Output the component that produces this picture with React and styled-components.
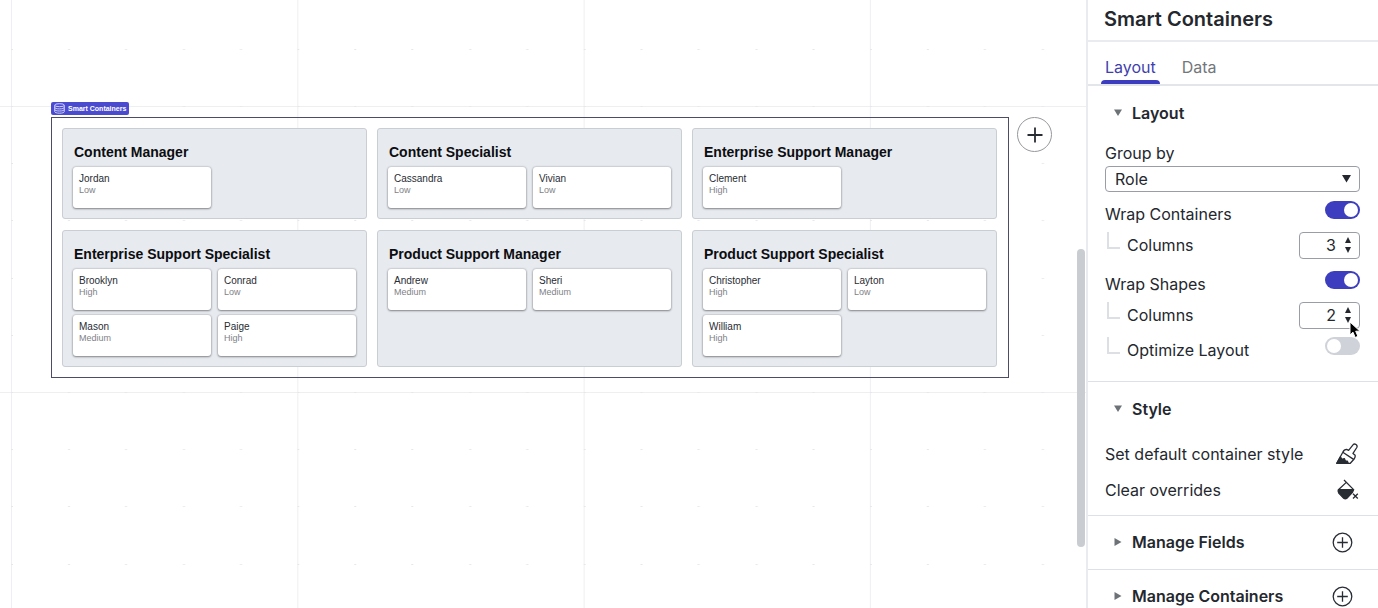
import React, { useState } from 'react';
import styled, { createGlobalStyle } from 'styled-components';

const GlobalStyle = createGlobalStyle`
  * {
    box-sizing: border-box;
  }
  body {
    margin: 0;
    background: #fff;
    color: #24282e;
    font-family: Inter, "Liberation Sans", sans-serif;
    font-size: 16px;
  }
  button, input, select {
    font: inherit;
    color: inherit;
  }
`;

const groups = [
  { role: 'Content Manager', people: [['Jordan', 'Low']] },
  { role: 'Content Specialist', people: [['Cassandra', 'Low'], ['Vivian', 'Low']] },
  { role: 'Enterprise Support Manager', people: [['Clement', 'High']] },
  {
    role: 'Enterprise Support Specialist',
    people: [['Brooklyn', 'High'], ['Conrad', 'Low'], ['Mason', 'Medium'], ['Paige', 'High']],
  },
  { role: 'Product Support Manager', people: [['Andrew', 'Medium'], ['Sheri', 'Medium']] },
  {
    role: 'Product Support Specialist',
    people: [['Christopher', 'High'], ['Layton', 'Low'], ['William', 'High']],
  },
];

/* Page */

const Page = styled.div`
  display: flex;
  height: 100vh;
  overflow: hidden;
`;

const Canvas = styled.main`
  position: relative;
  flex: 1;
  min-width: 0;
  padding: 102px 34px 0 51px;
`;

const GridLines = styled.svg`
  position: absolute;
  inset: 0;
  width: 100%;
  height: 100%;
  z-index: -1;
`;

const ScrollThumb = styled.div`
  position: absolute;
  top: 41%;
  right: 1px;
  width: 8px;
  height: 49%;
  border-radius: 4px;
  background: #c9cdd1;
`;

const Board = styled.div`
  display: flex;
  align-items: flex-start;
  gap: 8px;
`;

const Tag = styled.div`
  display: flex;
  align-items: center;
  gap: 3px;
  width: max-content;
  height: 13px;
  margin-bottom: 2px;
  padding: 0 3px;
  border-radius: 2px;
  background: #4b4bd0;
  color: #fff;
  font: bold 7px/13px "Liberation Sans", Arial, sans-serif;
`;

const Frame = styled.section`
  flex: 1;
  display: grid;
  grid-template-columns: repeat(${(props) => props.$columns}, 1fr);
  gap: 11px 10px;
  padding: 10px 11px 10px 10px;
  border: 1px solid #4c4c66;
  font-family: "Liberation Sans", Arial, sans-serif;
`;

const Container = styled.article`
  padding: 10px;
  border: 1px solid #c9cdd4;
  border-radius: 3px;
  background: #e7eaef;
`;

const ContainerTitle = styled.h2`
  margin: 0 0 2px;
  padding-left: 1px;
  color: #0c0d10;
  font-size: 14px;
  line-height: 26px;
  white-space: nowrap;
`;

const Cards = styled.div`
  display: grid;
  grid-template-columns: repeat(${(props) => props.$columns}, 1fr);
  gap: 5px 7px;
`;

const Card = styled.div`
  height: 41px;
  padding: 6px;
  border-radius: 3px;
  background: #fff;
  box-shadow: 0 0 2px rgba(60, 64, 72, 0.45), 0 1px 2px rgba(40, 44, 51, 0.45);
`;

const Name = styled.div`
  color: #282c33;
  font-size: 10px;
  line-height: 12px;
`;

const Level = styled.div`
  color: #808287;
  font-size: 9px;
  line-height: 11px;
`;

const AddButton = styled.button`
  display: flex;
  align-items: center;
  justify-content: center;
  width: 35px;
  height: 35px;
  padding: 0;
  border: 1px solid #96989d;
  border-radius: 50%;
  background: #fff;
`;

/* Side panel */

const Panel = styled.aside`
  flex: none;
  width: 292px;
  border-left: 2px solid #e9ebee;
  background: #fff;
  overflow: hidden;
`;

const PanelTitle = styled.h1`
  margin: 0;
  padding: 0 16px 1px;
  border-bottom: 2px solid #e9ebee;
  font-size: 20px;
  font-weight: 600;
  line-height: 39px;
`;

const Tabs = styled.nav`
  display: flex;
  gap: 18px;
  padding: 0 13px;
  border-bottom: 2px solid #e2e6ea;
`;

const Tab = styled.button`
  position: relative;
  height: 42px;
  padding: 7px 4px 0;
  border: 0;
  background: none;
  color: ${(props) => (props.$active ? '#3f3fae' : '#73767b')};

  &::after {
    content: '';
    position: absolute;
    left: 0;
    right: 0;
    bottom: 0;
    height: 4px;
    border-radius: 4px 4px 0 0;
    background: ${(props) => (props.$active ? '#3d3dbf' : 'none')};
  }
`;

const Section = styled.section`
  padding: 0 18px ${(props) => props.$bottom || 0}px 17px;
  border-bottom: 1px solid #dde0e4;
`;

const SectionHead = styled.div`
  display: flex;
  align-items: center;
  justify-content: space-between;
  height: ${(props) => (props.$open ? 54 : 53)}px;
  padding: 0 7px 1px 9px;
`;

const SectionToggle = styled.button`
  display: flex;
  align-items: center;
  gap: 10px;
  padding: 0;
  border: 0;
  background: none;
  font-weight: 600;
  white-space: nowrap;
`;

const IconButton = styled.button`
  display: flex;
  padding: 0;
  border: 0;
  background: none;
`;

const FieldLabel = styled.label`
  display: block;
  line-height: 26px;
`;

const SelectBox = styled.div`
  display: grid;
  align-items: center;

  > * {
    grid-area: 1 / 1;
  }
  svg {
    justify-self: end;
    margin-right: 9px;
    pointer-events: none;
  }
`;

const Select = styled.select`
  width: 100%;
  height: 26px;
  padding: 0 9px;
  border: 1px solid #9a9da5;
  border-radius: 4px;
  background: #fff;
  appearance: none;
`;

const Row = styled.div`
  display: flex;
  align-items: flex-start;
  justify-content: space-between;
  padding: ${(props) => props.$top}px 0 ${(props) => props.$bottom}px;
  line-height: 27px;
`;

const ChildLabel = styled.label`
  display: flex;

  &::before {
    content: '';
    width: 11px;
    height: 15px;
    margin: 0 7px 0 2px;
    border: solid #dcdfe4;
    border-width: 0 0 2px 2px;
  }
`;

const Switch = styled.input.attrs({ type: 'checkbox' })`
  width: 35px;
  height: 18px;
  margin: 0;
  padding: 2px;
  border-radius: 9px;
  background: #cfd2d8;
  appearance: none;

  &::before {
    content: '';
    display: block;
    width: 14px;
    height: 14px;
    border-radius: 50%;
    background: #fff;
  }
  &:checked {
    background: #3d3dbf;
  }
  &:checked::before {
    margin-left: auto;
  }
`;

const Stepper = styled.div`
  display: flex;
  align-items: center;
  width: 61px;
  height: 27px;
  padding-right: 8px;
  border: 1px solid #9a9da5;
  border-radius: 4px;
  background: #fff;
`;

const NumberInput = styled.input.attrs({ type: 'number' })`
  flex: 1;
  min-width: 0;
  height: 24px;
  padding: 0 9px 0 0;
  border: 0;
  background: none;
  text-align: right;
  outline: none;
  appearance: textfield;

  &::-webkit-inner-spin-button {
    appearance: none;
    margin: 0;
  }
`;

const StepButtons = styled.div`
  display: grid;
  gap: 4px;
  padding-bottom: 2px;
`;

const ActionRow = styled.button`
  display: flex;
  align-items: center;
  justify-content: space-between;
  width: 100%;
  height: 36px;
  padding: 0;
  border: 0;
  background: none;
  white-space: nowrap;
`;

const Pointer = styled.svg`
  position: absolute;
  right: -1px;
  bottom: -10px;
  z-index: 1;
`;

const StepperWrap = styled.div`
  position: relative;
`;

/* Icons */

const DatabaseIcon = () => (
  <svg width="11" height="11" viewBox="0 0 11 11" fill="none" stroke="#d9d9ff" strokeWidth="0.9">
    <ellipse cx="5.5" cy="2.2" rx="4.8" ry="1.5" />
    <path d="M.7 2.2v6.4c0 .9 2.100 1.600 4.800 1.600s4.800-.7 4.800-1.600V2.200M.7 4.400c0 .9 2.100 1.500 4.800 1.500s4.800-.6 4.800-1.500M.7 6.500c0 .9 2.100 1.500 4.800 1.500s4.800-.6 4.800-1.500" />
  </svg>
);

const PlusIcon = () => (
  <svg width="16" height="16" viewBox="0 0 16 16" stroke="#282c33" strokeWidth="1.8">
    <path d="M8 .5v15M.5 8h15" />
  </svg>
);

const CirclePlusIcon = () => (
  <svg width="21" height="21" viewBox="0 0 21 21" fill="none" stroke="#282c33" strokeWidth="1.3">
    <circle cx="10.5" cy="10.5" r="9.3" />
    <path d="M10.5 5.2v10.6M5.2 10.5h10.6" />
  </svg>
);

const Caret = ({ open }) => (
  <svg width="8" height="8" viewBox="0 0 8 8" fill="#6d7277">
    <path d={open ? 'M0 .5h8L4 7z' : 'M.5 0v8L7.5 4z'} />
  </svg>
);

const BrushIcon = () => (
  <svg width="24" height="22" viewBox="0 0 24 22" fill="none" stroke="#282c33" strokeWidth="1.3" strokeLinejoin="round">
    <path d="M.8 20.300 6.800 9.200C7.500 7.600 8.800 6.300 10.600 6.300L12.600 7.300 17.200 1.700C18.700-.1 22 2.200 20.800 4.500L17 10.400 18.900 12C19.500 12.800 18.900 14.800 17.900 16.300L14.300 20.300z" />
    <path d="M6.800 9.200 17.600 16.400" />
    <path fill="#282c33" d="M.8 20.300 4.300 14 6.200 16.300 8.300 15.600 9.300 17.800 11.400 18.200 12.200 20.300z" />
  </svg>
);

const BucketIcon = () => (
  <svg width="24" height="22" viewBox="0 0 24 22" fill="none" stroke="#282c33" strokeWidth="1.3">
    <path d="M8 1 17.600 10.600M10.300 3.400 2.700 10.500" />
    <path fill="#282c33" strokeLinejoin="round" d="M2.400 10.600H17.700L16.500 13.300 10.900 19.300Q9.300 20.600 7.700 19.300L2.700 14.100Q1.400 12.600 2.400 10.600z" />
    <path d="M17 14.700 21.800 19.500M21.800 14.700 17 19.500" />
  </svg>
);

const Arrow = ({ down }) => (
  <svg width="6" height="6" viewBox="0 0 6 6" fill="#24282e">
    <path d={down ? 'M0 0h6L3 6z' : 'M0 6h6L3 0z'} />
  </svg>
);

const CanvasGrid = () => {
  const steps = [0, 57, 114, 172, 229];
  return (
    <GridLines aria-hidden="true">
      <defs>
        <pattern id="grid" x="11" y="106" width="286.3" height="286" patternUnits="userSpaceOnUse">
          <path d="M0 .5H287M.5 0V286" stroke="#efeff2" />
          {steps.map((x) =>
            steps.map((y) => <rect key={x + '-' + y} x={x} y={y} width="2" height="1" fill="#e6e6ec" />)
          )}
        </pattern>
      </defs>
      <rect width="100%" height="100%" fill="url(#grid)" />
    </GridLines>
  );
};

function ColumnStepper({ id, value, onChange, children }) {
  return (
    <StepperWrap>
      <Stepper>
        <NumberInput id={id} min="1" value={value} onChange={(e) => onChange(Number(e.target.value) || 1)} />
        <StepButtons>
          <IconButton aria-label="Increase" onClick={() => onChange(value + 1)}>
            <Arrow />
          </IconButton>
          <IconButton aria-label="Decrease" onClick={() => onChange(Math.max(1, value - 1))}>
            <Arrow down />
          </IconButton>
        </StepButtons>
      </Stepper>
      {children}
    </StepperWrap>
  );
}

function SectionHeader({ title, open, addable }) {
  return (
    <SectionHead $open={open}>
      <SectionToggle aria-expanded={!!open}>
        <Caret open={open} />
        {title}
      </SectionToggle>
      {addable && (
        <IconButton aria-label={'Add to ' + title}>
          <CirclePlusIcon />
        </IconButton>
      )}
    </SectionHead>
  );
}

export default function App() {
  const [containerColumns, setContainerColumns] = useState(3);
  const [shapeColumns, setShapeColumns] = useState(2);

  return (
    <Page>
      <GlobalStyle />
      <Canvas>
        <CanvasGrid />
        <Tag>
          <DatabaseIcon />
          Smart Containers
        </Tag>
        <Board>
          <Frame $columns={containerColumns}>
            {groups.map((group) => (
              <Container key={group.role}>
                <ContainerTitle>{group.role}</ContainerTitle>
                <Cards $columns={shapeColumns}>
                  {group.people.map(([name, level]) => (
                    <Card key={name}>
                      <Name>{name}</Name>
                      <Level>{level}</Level>
                    </Card>
                  ))}
                </Cards>
              </Container>
            ))}
          </Frame>
          <AddButton aria-label="Add container">
            <PlusIcon />
          </AddButton>
        </Board>
        <ScrollThumb />
      </Canvas>

      <Panel>
        <PanelTitle>Smart Containers</PanelTitle>
        <Tabs>
          <Tab $active>Layout</Tab>
          <Tab>Data</Tab>
        </Tabs>

        <Section $bottom={13}>
          <SectionHeader title="Layout" open />
          <FieldLabel htmlFor="group-by">Group by</FieldLabel>
          <SelectBox>
            <Select id="group-by" defaultValue="Role">
              <option>Role</option>
            </Select>
            <svg width="9" height="8" viewBox="0 0 9 8" fill="#24282e">
              <path d="M0 0h9L4.5 7.500z" />
            </svg>
          </SelectBox>
          <Row $top={9} $bottom={4}>
            <label htmlFor="wrap-containers">Wrap Containers</label>
            <Switch id="wrap-containers" defaultChecked />
          </Row>
          <Row $top={0} $bottom={3}>
            <ChildLabel htmlFor="container-columns">Columns</ChildLabel>
            <ColumnStepper id="container-columns" value={containerColumns} onChange={setContainerColumns} />
          </Row>
          <Row $top={9} $bottom={4}>
            <label htmlFor="wrap-shapes">Wrap Shapes</label>
            <Switch id="wrap-shapes" defaultChecked />
          </Row>
          <Row $top={0} $bottom={3}>
            <ChildLabel htmlFor="shape-columns">Columns</ChildLabel>
            <ColumnStepper id="shape-columns" value={shapeColumns} onChange={setShapeColumns}>
              <Pointer width="12" height="18" viewBox="0 0 12 18" aria-hidden="true">
                <path
                  d="M1 1v13l3-2.800 2.200 5.300 2.700-1.200-2.200-5.100H11z"
                  fill="#000"
                  stroke="#fff"
                  strokeWidth="1"
                />
              </Pointer>
            </ColumnStepper>
          </Row>
          <Row $top={5} $bottom={4}>
            <ChildLabel htmlFor="optimize">Optimize Layout</ChildLabel>
            <Switch id="optimize" />
          </Row>
        </Section>

        <Section $bottom={7}>
          <SectionHeader title="Style" open />
          <ActionRow>
            Set default container style
            <BrushIcon />
          </ActionRow>
          <ActionRow>
            Clear overrides
            <BucketIcon />
          </ActionRow>
        </Section>

        <Section>
          <SectionHeader title="Manage Fields" addable />
        </Section>
        <Section>
          <SectionHeader title="Manage Containers" addable />
        </Section>
      </Panel>
    </Page>
  );
}
